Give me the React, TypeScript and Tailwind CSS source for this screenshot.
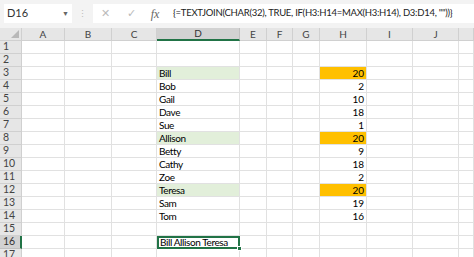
import React from "react";

const cols = ["A", "B", "C", "D", "E", "F", "G", "H", "I", "J", ""];

const names: Record<number, string> = {
  3: "Bill",
  4: "Bob",
  5: "Gail",
  6: "Dave",
  7: "Sue",
  8: "Allison",
  9: "Betty",
  10: "Cathy",
  11: "Zoe",
  12: "Teresa",
  13: "Sam",
  14: "Tom",
};

const scores: Record<number, number> = {
  3: 20,
  4: 2,
  5: 10,
  6: 18,
  7: 1,
  8: 20,
  9: 9,
  10: 18,
  11: 2,
  12: 20,
  13: 19,
  14: 16,
};

const rows = Array.from({ length: 17 }, (_, i) => i + 1);

const FormulaBar = () => (
  <div className="h-[28px] bg-[#f3f3f3] flex items-start pt-[4px] pl-[4px] shrink-0">
    <div className="w-[68px] h-[19px] bg-white flex items-center justify-between px-[3px] text-[11px] text-[#333] shrink-0">
      <span>D16</span>
      <span className="text-[7px] text-[#666]">▼</span>
    </div>
    <div className="w-[21px] flex justify-center text-[#bbb] text-[9px] leading-[19px] shrink-0">⋮</div>
    <div className="flex-1 h-[19px] bg-white flex items-center min-w-0">
      <span className="w-[24px] shrink-0 text-center text-[#bbb] text-[11px]">✕</span>
      <span className="w-[28px] shrink-0 text-center text-[#bbb] text-[11px]">✓</span>
      <span
        className="w-[20px] shrink-0 text-center text-[#666] text-[12px] italic"
        style={{ fontFamily: "'Liberation Serif', serif" }}
      >
        fx
      </span>
      <span className="ml-[8px] shrink-0 text-[9.5px] tracking-[-0.27px] text-[#222] whitespace-nowrap">
        {'{=TEXTJOIN(CHAR(32), TRUE, IF(H3:H14=MAX(H3:H14), D3:D14, ""))}'}
      </span>
    </div>
  </div>
);

export default function App() {
  return (
    <div
      className="w-[474px] h-[257px] overflow-hidden bg-white flex flex-col"
      style={{ fontFamily: "Lato, 'Open Sans', sans-serif" }}
    >
      <FormulaBar />
      <div className="grid grid-cols-[22px_43px_47px_45px_83px_27px_26px_27px_47px_46px_46px_1fr] auto-rows-[13px]">
        {/* header row */}
        <div className="bg-[#e6e6e6] border-r border-b border-[#d0d0d0] relative">
          <div className="absolute right-[2px] bottom-[2px] w-0 h-0 border-l-[8px] border-l-transparent border-b-[8px] border-b-[#b8b8b8]" />
        </div>
        {cols.map((c, i) =>
          c === "D" ? (
            <div
              key={i}
              className="bg-[#d2d2d2] border-r border-[#c0c0c0] border-b-2 border-b-[#217346] flex items-center justify-center text-[10px] text-[#333]"
            >
              {c}
            </div>
          ) : (
            <div
              key={i}
              className="bg-[#e6e6e6] border-r border-b border-[#d0d0d0] flex items-center justify-center text-[10px] text-[#444]"
            >
              {c}
            </div>
          )
        )}
        {rows.map((r) => (
          <React.Fragment key={r}>
            <div
              className={
                r === 16
                  ? "bg-[#d2d2d2] border-r-2 border-r-[#217346] border-b border-b-[#c0c0c0] flex items-center pl-[3px] text-[10.5px] text-[#333]"
                  : "bg-[#e6e6e6] border-r border-b border-[#d0d0d0] flex items-center pl-[3px] text-[10.5px] text-[#444]"
              }
            >
              {r}
            </div>
            {cols.map((c, i) => {
              if (c === "D") {
                if (r === 16) {
                  return (
                    <div
                      key={i}
                      className="relative border-2 border-[#217346] flex items-center pl-[1px] text-[10px] tracking-[-0.4px] text-black whitespace-nowrap"
                    >
                      Bill Allison Teresa
                      <div className="absolute right-[-4px] bottom-[-4px] w-[5px] h-[5px] bg-[#217346] border border-white" />
                    </div>
                  );
                }
                const hi = r === 3 || r === 8 || r === 12;
                return (
                  <div
                    key={i}
                    className={`border-r border-b border-[#e1e1e1] flex items-center pl-[2px] text-[10px] tracking-[-0.4px] text-black ${
                      hi ? "bg-[#e2efda]" : ""
                    }`}
                  >
                    {names[r] ?? ""}
                  </div>
                );
              }
              if (c === "H") {
                const v = scores[r];
                return (
                  <div
                    key={i}
                    className={`border-r border-b border-[#e1e1e1] flex items-center justify-end pr-[2px] text-[10px] text-black ${
                      v === 20 ? "bg-[#ffc000]" : ""
                    }`}
                  >
                    {v ?? ""}
                  </div>
                );
              }
              return <div key={i} className="border-r border-b border-[#e1e1e1]" />;
            })}
          </React.Fragment>
        ))}
      </div>
    </div>
  );
}
